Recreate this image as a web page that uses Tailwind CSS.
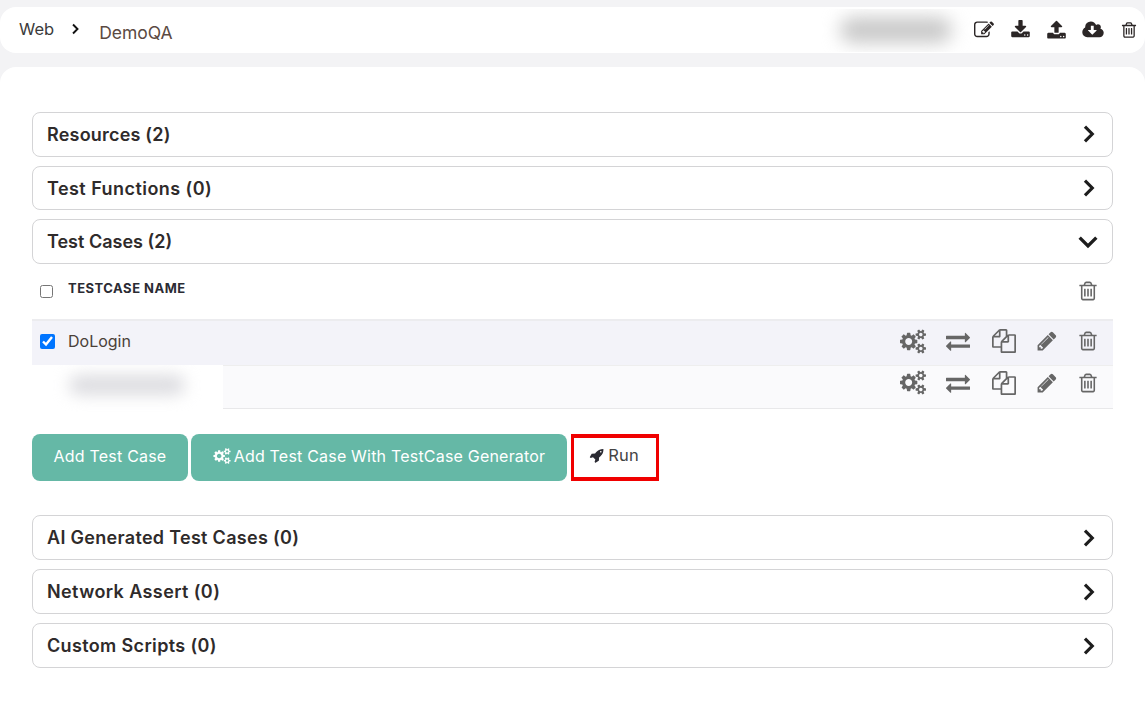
<!DOCTYPE html>
<html lang="en">
<head>
  <meta charset="UTF-8" />
  <title>DemoQA</title>
  <script src="https://cdn.jsdelivr.net/npm/@tailwindcss/browser@4"></script>
</head>
<body class="bg-[#f3f3f5] text-[#2f2b2b] font-['Inter','Liberation_Sans',sans-serif] h-[717px] overflow-hidden">
  <svg class="hidden">
    <symbol id="trash" viewBox="0 0 1408 1792"><path transform="translate(-192 0)" d="M704 736v576q0 14-9 23t-23 9h-64q-14 0-23-9t-9-23v-576q0-14 9-23t23-9h64q14 0 23 9t9 23zm256 0v576q0 14-9 23t-23 9h-64q-14 0-23-9t-9-23v-576q0-14 9-23t23-9h64q14 0 23 9t9 23zm256 0v576q0 14-9 23t-23 9h-64q-14 0-23-9t-9-23v-576q0-14 9-23t23-9h64q14 0 23 9t9 23zm128 724v-948h-896v948q0 22 7 40.5t14.5 27 10.5 8.5h832q3 0 10.5-8.5t14.5-27 7-40.5zm-672-1076h448l-48-117q-7-9-17-11h-317q-10 2-17 11zm928 32v64q0 14-9 23t-23 9h-96v948q0 83-47 143.5t-113 60.5h-832q-66 0-113-58.5t-47-141.5v-952h-96q-14 0-23-9t-9-23v-64q0-14 9-23t23-9h309l70-167q15-37 54-63t79-26h320q40 0 79 26t54 63l70 167h309q14 0 23 9t9 23z"/></symbol>
    <symbol id="pencil" viewBox="0 0 1536 1792"><path d="M363 1536l91-91-235-235-91 91v107h128v128h107zm523-928q0-22-22-22-10 0-17 7l-542 542q-7 7-7 17 0 22 22 22 10 0 17-7l542-542q7-7 7-17zm-54-192l416 416-832 832h-416v-416zm683 96q0 53-37 90l-166 166-416-416 166-165q36-38 90-38 53 0 91 38l235 234q37 39 37 91z"/></symbol>
    <symbol id="exchange" viewBox="0 0 1792 1792"><path d="M1792 1184v192q0 13-9.500 22.500t-22.500 9.500h-1376v192q0 13-9.500 22.500t-22.500 9.500q-12 0-24-10l-319-320q-9-9-9-22 0-14 9-23l320-320q9-9 23-9 13 0 22.500 9.500t9.500 22.500v192h1376q13 0 22.500 9.500t9.500 22.500zm0-544q0 14-9 23l-320 320q-9 9-23 9-13 0-22.500-9.500t-9.500-22.500v-192h-1376q-13 0-22.500-9.500t-9.500-22.500v-192q0-13 9.500-22.500t22.500-9.500h1376v-192q0-14 9-23t23-9q12 0 24 10l319 319q9 9 9 23z"/></symbol>
    <symbol id="files" viewBox="0 0 1792 1792"><path d="M1696 384q40 0 68 28t28 68v1216q0 40-28 68t-68 28h-960q-40 0-68-28t-28-68v-288h-544q-40 0-68-28t-28-68v-672q0-40 20-88t48-76l408-408q28-28 76-48t88-20h416q40 0 68 28t28 68v328q68-40 128-40h416zm-544 213l-299 299h299v-299zm-640-384l-299 299h299v-299zm196 647l316-316v-416h-384v416q0 40-28 68t-68 28h-416v640h512v-256q0-40 20-88t48-76zm956 804v-1152h-384v416q0 40-28 68t-68 28h-416v640h896z"/></symbol>
    <symbol id="cogs" viewBox="0 0 1920 1792"><path d="M896 896q0-106-75-181t-181-75-181 75-75 181 75 181 181 75 181-75 75-181zm768 512q0-52-38-90t-90-38-90 38-38 90q0 53 37.500 90.500t90.500 37.500 90.500-37.500 37.500-90.500zm0-1024q0-52-38-90t-90-38-90 38-38 90q0 53 37.500 90.500t90.500 37.500 90.500-37.500 37.500-90.500zm-384 421v185q0 10-7 19.500t-16 10.500l-155 24q-11 35-32 76 34 48 90 115 7 11 7 20 0 12-7 19-23 30-82.500 89.500t-78.500 59.500q-11 0-21-7l-115-90q-37 19-77 31-11 108-23 155-7 24-30 24h-186q-11 0-20-7.500t-10-17.500l-23-153q-34-10-75-31l-118 89q-7 7-20 7-11 0-21-8-144-133-144-160 0-9 7-19 10-14 41-53t47-61q-23-44-35-82l-152-24q-10-1-17-9.500t-7-19.500v-185q0-10 7-19.500t16-10.500l155-24q11-35 32-76-34-48-90-115-7-11-7-20 0-12 7-20 22-30 82-89t79-59q11 0 21 7l115 90q34-18 77-32 11-108 23-154 7-24 30-24h186q11 0 20 7.500t10 17.500l23 153q34 10 75 31l118-89q8-7 20-7 11 0 21 8 144 133 144 160 0 8-7 19-12 16-42 54t-45 60q23 48 34 82l152 23q10 2 17 10.500t7 19.500zm640 533v140q0 16-149 31-12 27-30 52 51 113 51 138 0 4-4 7-122 71-124 71-8 0-46-47t-52-68q-20 2-30 2t-30-2q-14 21-52 68t-46 47q-2 0-124-71-4-3-4-7 0-25 51-138-18-25-30-52-149-15-149-31v-140q0-16 149-31 13-29 30-52-51-113-51-138 0-4 4-7 4-2 35-20t59-34 30-16q8 0 46 46.500t52 67.500q20-2 30-2t30 2q51-71 92-112l6-2q4 0 124 70 4 3 4 7 0 25-51 138 17 23 30 52 149 15 149 31zm0-1024v140q0 16-149 31-12 27-30 52 51 113 51 138 0 4-4 7-122 71-124 71-8 0-46-47t-52-68q-20 2-30 2t-30-2q-14 21-52 68t-46 47q-2 0-124-71-4-3-4-7 0-25 51-138-18-25-30-52-149-15-149-31v-140q0-16 149-31 13-29 30-52-51-113-51-138 0-4 4-7 4-2 35-20t59-34 30-16q8 0 46 46.500t52 67.500q20-2 30-2t30 2q51-71 92-112l6-2q4 0 124 70 4 3 4 7 0 25-51 138 17 23 30 52 149 15 149 31z"/></symbol>
    <symbol id="rocket" viewBox="0 0 1664 1792"><path transform="translate(-64 0)" d="M1504 448q0-40-28-68t-68-28-68 28-28 68 28 68 68 28 68-28 28-68zm224-288q0 249-75.500 430.500t-253.500 360.500q-81 80-195 176l-20 379q-2 16-16 26l-384 224q-7 4-16 4-12 0-23-9l-64-64q-13-14-8-32l85-276-281-281-276 85q-3 1-9 1-14 0-23-9l-64-64q-17-19-5-39l224-384q10-14 26-16l379-20q96-114 176-195 188-187 358-258t431-71q14 0 23.500 9t9.500 22z"/></symbol>
    <symbol id="edit" viewBox="0 0 1792 1792"><path d="M888 1184l116-116-152-152-116 116v56h96v96h56zm440-720q-16-16-33 1l-350 350q-17 17-1 33t33-1l350-350q17-17 1-33zm80 594v190q0 119-84.500 203.500t-203.500 84.500h-832q-119 0-203.500-84.500t-84.500-203.500v-832q0-119 84.500-203.500t203.500-84.500h832q63 0 117 25 15 7 18 23 3 17-9 29l-49 49q-14 14-32 8-23-6-45-6h-832q-66 0-113 47t-47 113v832q0 66 47 113t113 47h832q66 0 113-47t47-113v-126q0-13 9-22l64-64q15-15 35-7t20 29zm-96-738l288 288-672 672h-288v-288zm444 132l-92 92-288-288 92-92q28-28 68-28t68 28l152 152q28 28 28 68t-28 68z"/></symbol>
    <symbol id="download" viewBox="0 0 1664 1792"><path d="M1280 1344q0-26-19-45t-45-19-45 19-19 45 19 45 45 19 45-19 19-45zm256 0q0-26-19-45t-45-19-45 19-19 45 19 45 45 19 45-19 19-45zm128-224v320q0 40-28 68t-68 28h-1472q-40 0-68-28t-28-68v-320q0-40 28-68t68-28h465l135 136q58 56 136 56t136-56l136-136h464q40 0 68 28t28 68zm-325-569q17 41-14 70l-448 448q-18 19-45 19t-45-19l-448-448q-31-29-14-70 17-39 59-39h256v-448q0-26 19-45t45-19h256q26 0 45 19t19 45v448h256q42 0 59 39z"/></symbol>
    <symbol id="upload" viewBox="0 0 1664 1792"><path d="M1280 1472q0-26-19-45t-45-19-45 19-19 45 19 45 45 19 45-19 19-45zm256 0q0-26-19-45t-45-19-45 19-19 45 19 45 45 19 45-19 19-45zm128-224v320q0 40-28 68t-68 28h-1472q-40 0-68-28t-28-68v-320q0-40 28-68t68-28h427q21 56 70.500 92t110.500 36h256q61 0 110.500-36t70.500-92h427q40 0 68 28t28 68zm-325-648q-17 40-59 40h-256v448q0 26-19 45t-45 19h-256q-26 0-45-19t-19-45v-448h-256q-42 0-59-40-17-39 14-69l448-448q18-19 45-19t45 19l448 448q31 30 14 69z"/></symbol>
    <symbol id="cloud" viewBox="0 0 1920 1792"><path d="M1280 928q0-14-9-23t-23-9h-224v-352q0-13-9.500-22.500t-22.500-9.500h-192q-13 0-22.500 9.500t-9.500 22.500v352h-224q-13 0-22.500 9.500t-9.500 22.500q0 14 9 23l352 352q9 9 23 9t23-9l351-351q10-12 10-24zm640 224q0 159-112.500 271.500t-271.500 112.500h-1088q-185 0-316.500-131.500t-131.500-316.500q0-130 70-240t188-165q-2-30-2-43 0-212 150-362t362-150q156 0 285.500 87t188.500 231q71-62 166-62 106 0 181 75t75 181q0 76-41 138 130 31 213.500 135.500t83.500 238.500z"/></symbol>
    <symbol id="right" viewBox="0 0 16 16"><path d="M4.400 1.500 10.900 8l-6.500 6.500" fill="none" stroke="currentColor" stroke-width="2.800"/></symbol>
    <symbol id="down" viewBox="0 0 18 16"><path d="M1.500 4 9 11.500 16.500 4" fill="none" stroke="currentColor" stroke-width="3"/></symbol>
  </svg>

  <header class="mt-[7px] h-[46px] bg-white rounded-[16px] flex items-center pl-[19px] relative">
    <span class="text-[16.500px] text-[#3b3b3b] -mt-[1px]">Web</span>
    <svg class="w-[11px] h-[12px] ml-[16px] -mt-[2px] text-[#111]"><use href="#right"/></svg>
    <span class="text-[17.500px] text-[#5b4a42] ml-[18px] mt-[6px]">DemoQA</span>
    <div class="ml-auto flex items-center text-[#2b2626] fill-current">
      <div class="w-[150px] h-[43px] mr-[3px] bg-white overflow-hidden flex items-center justify-center">
        <div class="w-[112px] h-[26px] rounded-full bg-[#c9c9c9] blur-[9px]"></div>
      </div>
      <svg class="w-[20px] h-[20px]"><use href="#edit"/></svg>
      <svg class="w-[19px] h-[20px] ml-[17px]"><use href="#download"/></svg>
      <svg class="w-[19px] h-[20px] ml-[17px]"><use href="#upload"/></svg>
      <svg class="w-[22px] h-[20px] ml-[16px]"><use href="#cloud"/></svg>
      <svg class="w-[16px] h-[18px] ml-[17px] mr-[8px]"><use href="#trash"/></svg>
    </div>
  </header>

  <main class="mt-[14px] bg-white rounded-t-[16px] h-[650px] px-[32px] pt-[45px]">
    <div class="flex flex-col gap-[9px]">
      <div class="h-[45px] border border-[#d4d4d6] rounded-[8px] flex items-center justify-between pl-[14px] pr-[14px]">
        <span class="text-[18px] font-semibold tracking-[0.2px] -mt-[1px]">Resources (2)</span>
        <svg class="w-[18px] h-[18px] text-[#1d1d1d] -mt-[1px]"><use href="#right"/></svg>
      </div>
      <div class="h-[44px] border border-[#d4d4d6] rounded-[8px] flex items-center justify-between pl-[14px] pr-[14px]">
        <span class="text-[18px] font-semibold tracking-[0.45px]">Test Functions (0)</span>
        <svg class="w-[18px] h-[18px] text-[#1d1d1d]"><use href="#right"/></svg>
      </div>
      <div class="h-[45px] border border-[#d4d4d6] rounded-[8px] flex items-center justify-between pl-[14px] pr-[14px]">
        <span class="text-[18px] font-semibold tracking-[0px] -mt-[1px]">Test Cases (2)</span>
        <svg class="w-[20px] h-[18px] text-[#1d1d1d]"><use href="#down"/></svg>
      </div>
    </div>

    <div class="h-[57px] flex items-center pl-[8px] pr-[15px] pb-[2px] border-b-2 border-[#ececef]">
      <input type="checkbox" class="w-[13px] h-[13px] mt-[1px]" />
      <span class="ml-[15px] -mt-[3px] text-[13px] font-bold tracking-[0.5px] text-[#2b2b33]">TESTCASE NAME</span>
      <svg class="ml-auto w-[20px] h-[22px] fill-[#666]"><use href="#trash"/></svg>
    </div>
    <div class="h-[45px] bg-[#f3f3f9] border-b border-[#eeeeee] flex items-center pl-[8px] pr-[15px] pb-[4px]">
      <input type="checkbox" checked class="w-[15px] h-[15px]" />
      <span class="ml-[13px] text-[16px] text-[#4a4038]">DoLogin</span>
      <div class="ml-auto flex items-center fill-[#666]">
        <svg class="w-[26px] h-[25px]"><use href="#cogs"/></svg>
        <svg class="w-[24px] h-[24px] ml-[20px]"><use href="#exchange"/></svg>
        <svg class="w-[24px] h-[24px] ml-[22px]"><use href="#files"/></svg>
        <svg class="w-[20px] h-[22px] ml-[21px]"><use href="#pencil"/></svg>
        <svg class="w-[20px] h-[22px] ml-[21px]"><use href="#trash"/></svg>
      </div>
    </div>
    <div class="h-[43px] bg-[#fafafc] border-b border-[#e8e8ea] flex items-center pr-[15px] relative">
      <div class="absolute left-[-2px] top-[-1px] w-[193px] h-[47px] bg-white overflow-hidden flex items-center justify-center pb-[8px]">
        <div class="w-[116px] h-[20px] rounded-full bg-[#dcdce0] blur-[8px]"></div>
      </div>
      <div class="ml-auto flex items-center fill-[#666] -mt-[9px]">
        <svg class="w-[26px] h-[25px]"><use href="#cogs"/></svg>
        <svg class="w-[24px] h-[24px] ml-[20px]"><use href="#exchange"/></svg>
        <svg class="w-[24px] h-[24px] ml-[22px]"><use href="#files"/></svg>
        <svg class="w-[20px] h-[22px] ml-[21px]"><use href="#pencil"/></svg>
        <svg class="w-[20px] h-[22px] ml-[21px]"><use href="#trash"/></svg>
      </div>
    </div>

    <div class="mt-[25px] flex items-center gap-[3px] text-[16px] tracking-[0.2px]">
      <button class="w-[156px] h-[47px] bg-[#65b8a6] text-white rounded-[8px] pb-[4px]">Add Test Case</button>
      <button class="w-[376px] h-[47px] bg-[#65b8a6] text-white rounded-[8px] flex items-center justify-center gap-[3px] pb-[4px]">
        <svg class="w-[18px] h-[16px] fill-white"><use href="#cogs"/></svg>
        Add Test Case With TestCase Generator
      </button>
      <button class="ml-[1px] w-[88px] h-[47px] border-x-[3px] border-y-4 border-[#f00000] text-[#444] flex items-center justify-center gap-[4px] pb-[4px] pr-[2px]">
        <svg class="w-[15px] h-[15px] fill-[#2b2b33]"><use href="#rocket"/></svg>
        <span class="text-[16.500px]">Run</span>
      </button>
    </div>

    <div class="mt-[34px] flex flex-col gap-[9px]">
      <div class="h-[45px] border border-[#d4d4d6] rounded-[8px] flex items-center justify-between pl-[14px] pr-[14px]">
        <span class="text-[18px] font-semibold tracking-[0.3px]">AI Generated Test Cases (0)</span>
        <svg class="w-[18px] h-[18px] text-[#1d1d1d]"><use href="#right"/></svg>
      </div>
      <div class="h-[45px] border border-[#d4d4d6] rounded-[8px] flex items-center justify-between pl-[14px] pr-[14px]">
        <span class="text-[18px] font-semibold tracking-[0.4px]">Network Assert (0)</span>
        <svg class="w-[18px] h-[18px] text-[#1d1d1d]"><use href="#right"/></svg>
      </div>
      <div class="h-[45px] border border-[#d4d4d6] rounded-[8px] flex items-center justify-between pl-[14px] pr-[14px]">
        <span class="text-[18px] font-semibold tracking-[0.35px]">Custom Scripts (0)</span>
        <svg class="w-[18px] h-[18px] text-[#1d1d1d]"><use href="#right"/></svg>
      </div>
    </div>
  </main>
</body>
</html>
